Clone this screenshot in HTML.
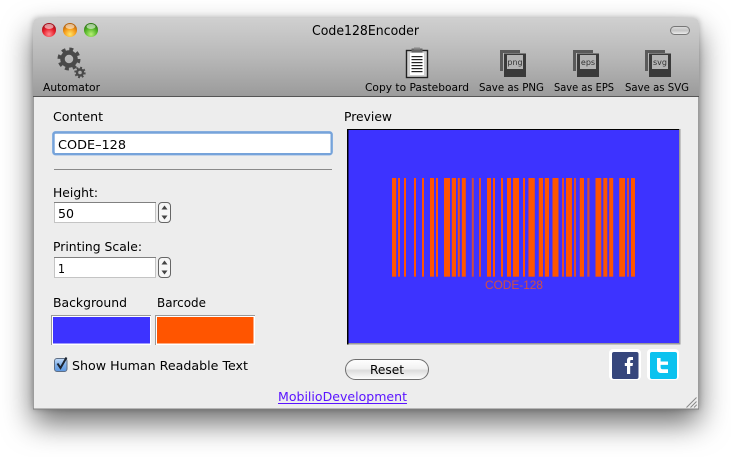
<!DOCTYPE html>
<html><head><meta charset="utf-8"><title>Code128Encoder</title>
<style>
html,body{margin:0;padding:0;background:#fff;width:731px;height:457px;overflow:hidden}
#win{position:absolute;left:33px;top:18px;width:666px;height:391px;border-radius:5px 5px 0 0;box-shadow:0 14px 30px rgba(0,0,0,.58),0 0 6px rgba(0,0,0,.25)}
svg{position:absolute;left:0;top:0}
text{font-family:"DejaVu Sans","Liberation Sans",sans-serif;fill:#000;stroke:none}
</style></head><body>
<div id="win"></div>
<svg width="731" height="457" viewBox="0 0 731 457" xmlns="http://www.w3.org/2000/svg">
<defs>
<linearGradient id="tb" x1="0" y1="0" x2="0" y2="1"><stop offset="0" stop-color="#d0d0d0"/><stop offset=".5" stop-color="#b8b8b8"/><stop offset="1" stop-color="#9b9b9b"/></linearGradient>
<radialGradient id="r" cx=".5" cy=".8" r=".7"><stop offset="0" stop-color="#ff8a90"/><stop offset=".6" stop-color="#e8202c"/><stop offset="1" stop-color="#a50c18"/></radialGradient>
<radialGradient id="y" cx=".5" cy=".8" r=".7"><stop offset="0" stop-color="#ffe56a"/><stop offset=".6" stop-color="#f59a18"/><stop offset="1" stop-color="#b8640c"/></radialGradient>
<radialGradient id="g" cx=".5" cy=".8" r=".7"><stop offset="0" stop-color="#b8f078"/><stop offset=".6" stop-color="#58b82a"/><stop offset="1" stop-color="#2f7c14"/></radialGradient>
<linearGradient id="btn" x1="0" y1="0" x2="0" y2="1"><stop offset="0" stop-color="#fff"/><stop offset=".45" stop-color="#f2f2f2"/><stop offset=".55" stop-color="#dcdcdc"/><stop offset="1" stop-color="#fff"/></linearGradient>
<linearGradient id="chk" x1="0" y1="0" x2="0" y2="1"><stop offset="0" stop-color="#c4dcf8"/><stop offset=".5" stop-color="#7fb0ea"/><stop offset="1" stop-color="#5d97e0"/></linearGradient>
<linearGradient id="pill" x1="0" y1="0" x2="0" y2="1"><stop offset="0" stop-color="#ddd"/><stop offset=".5" stop-color="#c4c4c4"/><stop offset="1" stop-color="#f2f2f2"/></linearGradient>
</defs>

<!-- window -->
<path d="M33 23a5 5 0 0 1 5-5h656a5 5 0 0 1 5 5v73H33z" fill="url(#tb)"/>
<rect x="33" y="96.5" width="666" height="312.5" fill="#ededed"/>
<rect x="33" y="96" width="666" height="1" fill="#555"/>
<rect x="33" y="97" width="1" height="312" fill="#9c9c9c"/>
<rect x="698" y="97" width="1" height="312" fill="#9c9c9c"/>
<rect x="33" y="408.5" width="666" height="1" fill="#808080"/>

<!-- traffic lights -->
<circle cx="49" cy="30" r="7" fill="url(#r)"/><ellipse cx="49" cy="26.5" rx="4.5" ry="2.5" fill="#fff" opacity=".55"/>
<circle cx="70" cy="30" r="7" fill="url(#y)"/><ellipse cx="70" cy="26.5" rx="4.5" ry="2.5" fill="#fff" opacity=".55"/>
<circle cx="91" cy="30" r="7" fill="url(#g)"/><ellipse cx="91" cy="26.5" rx="4.5" ry="2.5" fill="#fff" opacity=".55"/>

<text x="312" y="35" font-size="13" textLength="107" lengthAdjust="spacingAndGlyphs">Code128Encoder</text>
<rect x="670.5" y="26.5" width="19" height="8" rx="4" fill="url(#pill)" stroke="#777" stroke-width="1"/>

<!-- gear icon -->
<circle cx="69" cy="59" r="6.5" fill="none" stroke="#4a4a4a" stroke-width="4.5"/>
<circle cx="69" cy="59" r="9.8" fill="none" stroke="#4a4a4a" stroke-width="3.4" stroke-dasharray="3.9 3.8"/>
<circle cx="80" cy="72.5" r="3" fill="none" stroke="#4a4a4a" stroke-width="2.4"/>
<circle cx="80" cy="72.5" r="4.8" fill="none" stroke="#4a4a4a" stroke-width="1.8" stroke-dasharray="1.9 1.87"/>
<text x="43" y="91" font-size="11" textLength="57" lengthAdjust="spacingAndGlyphs">Automator</text>

<!-- clipboard icon -->
<rect x="406.5" y="50.5" width="21" height="27" fill="#cfcfcf" stroke="#222" stroke-width="1.4"/>
<rect x="410" y="53" width="14" height="22" fill="#fff"/>
<rect x="411.5" y="48.5" width="11" height="4" fill="#666"/>
<rect x="414" y="47.5" width="6" height="2" fill="#888"/>
<g fill="#222"><rect x="411.5" y="56" width="11" height="1.2"/><rect x="411.5" y="59" width="11" height="1.2"/><rect x="411.5" y="62" width="11" height="1.2"/><rect x="411.5" y="65" width="11" height="1.2"/><rect x="411.5" y="68" width="11" height="1.2"/><rect x="411.5" y="71" width="11" height="1.2"/></g>
<text x="365" y="91" font-size="11" textLength="104" lengthAdjust="spacingAndGlyphs">Copy to Pasteboard</text>

<!-- save icons -->
<g>
<path d="M500 71V50h20v3h-17v18z" fill="#5a5a5a"/>
<rect x="504" y="53.5" width="22" height="23.5" fill="#3a3a3a"/>
<rect x="507" y="55" width="16" height="14" fill="#b4b4b4"/>
<text x="515" y="65" font-size="8" text-anchor="middle" style="fill:#333">png</text>
</g>
<text x="479" y="91" font-size="11" textLength="65" lengthAdjust="spacingAndGlyphs">Save as PNG</text>
<g>
<path d="M573 71V50h20v3h-17v18z" fill="#5a5a5a"/>
<rect x="577" y="53.5" width="22" height="23.5" fill="#3a3a3a"/>
<rect x="580" y="55" width="16" height="14" fill="#b4b4b4"/>
<text x="588" y="65" font-size="8" text-anchor="middle" style="fill:#333">eps</text>
</g>
<text x="554" y="91" font-size="11" textLength="60" lengthAdjust="spacingAndGlyphs">Save as EPS</text>
<g>
<path d="M645 71V50h20v3h-17v18z" fill="#5a5a5a"/>
<rect x="649" y="53.5" width="22" height="23.5" fill="#3a3a3a"/>
<rect x="652" y="55" width="16" height="14" fill="#b4b4b4"/>
<text x="660" y="65" font-size="8" text-anchor="middle" style="fill:#333">svg</text>
</g>
<text x="625" y="91" font-size="11" textLength="64" lengthAdjust="spacingAndGlyphs">Save as SVG</text>

<!-- left form -->
<text x="53" y="121" font-size="12.5" textLength="50" lengthAdjust="spacingAndGlyphs">Content</text>
<rect x="52.5" y="131.5" width="280" height="23.5" rx="3" fill="none" stroke="#b4cdec" stroke-width="1"/>
<rect x="53.5" y="132.5" width="278" height="21.5" rx="2" fill="#fff" stroke="#76a3da" stroke-width="2.4"/>
<rect x="55" y="134" width="275.5" height="19" fill="#fff"/>
<text x="58" y="149" font-size="12.5" textLength="68" lengthAdjust="spacingAndGlyphs">CODE–128</text>
<rect x="54" y="169" width="278" height="1" fill="#8a8a8a"/>

<text x="53" y="197" font-size="12.5" textLength="45" lengthAdjust="spacingAndGlyphs">Height:</text>
<rect x="54.5" y="202.5" width="101" height="20" fill="#fff" stroke="#c4c4c4"/><rect x="54" y="202" width="102" height="1" fill="#808080"/>
<text x="58" y="218" font-size="12.5" textLength="16" lengthAdjust="spacingAndGlyphs">50</text>
<rect x="158.5" y="202.5" width="12" height="20" rx="3.5" fill="#f6f6f6" stroke="#666"/>
<path d="M164.5 205.5l3 4h-6zM164.5 219.5l3-4h-6z" fill="#444"/>

<text x="53" y="251" font-size="12.5" textLength="89" lengthAdjust="spacingAndGlyphs">Printing Scale:</text>
<rect x="54.5" y="257.5" width="101" height="20" fill="#fff" stroke="#c4c4c4"/><rect x="54" y="257" width="102" height="1" fill="#808080"/>
<text x="58" y="273" font-size="12.5" textLength="7" lengthAdjust="spacingAndGlyphs">1</text>
<rect x="158.5" y="257.5" width="12" height="20" rx="3.5" fill="#f6f6f6" stroke="#666"/>
<path d="M164.5 260.5l3 4h-6zM164.5 274.5l3-4h-6z" fill="#444"/>

<text x="53" y="307" font-size="12.5" textLength="74" lengthAdjust="spacingAndGlyphs">Background</text>
<text x="157" y="307" font-size="12.5" textLength="49" lengthAdjust="spacingAndGlyphs">Barcode</text>
<rect x="51" y="315" width="100" height="30" fill="#fff"/><path d="M51 345V315h100v1H52v29z" fill="#999"/>
<rect x="53" y="317" width="97" height="26.5" fill="#3d33ff"/>
<rect x="155" y="315" width="100" height="30" fill="#fff"/><path d="M155 345V315h100v1H156v29z" fill="#999"/>
<rect x="157" y="317" width="96.5" height="26.5" fill="#ff5500"/>

<rect x="54.5" y="358.5" width="12.5" height="13" rx="2.5" fill="url(#chk)" stroke="#5f6f85"/>
<path d="M57.5 363.5l3 4.5 6-10.5" fill="none" stroke="#1c2430" stroke-width="2"/>
<text x="72" y="370" font-size="12.5" textLength="176" lengthAdjust="spacingAndGlyphs">Show Human Readable Text</text>

<!-- preview -->
<text x="344" y="121" font-size="12.5" textLength="48" lengthAdjust="spacingAndGlyphs">Preview</text>
<rect x="347" y="129" width="333.5" height="215.5" fill="#999"/>
<rect x="347" y="129" width="332" height="1" fill="#000"/>
<rect x="347" y="129" width="1.5" height="215.5" fill="#000"/>
<rect x="348.5" y="130" width="330.5" height="213" fill="#3d33ff"/>
<g fill="#ff5500">
<rect x="392" y="178" width="4.2" height="98.7"/><rect x="398" y="178" width="2" height="98.7"/><rect x="404" y="178" width="2" height="98.7"/><rect x="414" y="178" width="2" height="98.7"/><rect x="422" y="178" width="2" height="98.7"/><rect x="430" y="178" width="4" height="98.7"/><rect x="436" y="178" width="2" height="98.7"/><rect x="444" y="178" width="6" height="98.7"/><rect x="451.8" y="178" width="4.2" height="98.7"/><rect x="457.8" y="178" width="2" height="98.7"/><rect x="461.8" y="178" width="4" height="98.7"/>
<rect x="471.8" y="178" width="2" height="98.7" opacity=".75"/><rect x="479" y="178" width="2" height="98.7" opacity=".85"/><rect x="487" y="178" width="4" height="98.7"/><rect x="493" y="178" width="2" height="98.7"/><rect x="501" y="178" width="2" height="98.7"/><rect x="507" y="178" width="4" height="98.7"/><rect x="513" y="178" width="6" height="98.7"/><rect x="523" y="178" width="2" height="98.7"/><rect x="528.5" y="178" width="6.3" height="98.7"/><rect x="538.8" y="178" width="4.2" height="98.7"/><rect x="544.8" y="178" width="4.2" height="98.7"/><rect x="552.5" y="178" width="6" height="98.7"/><rect x="562" y="178" width="2" height="98.7" opacity=".85"/><rect x="566" y="178" width="6" height="98.7"/><rect x="574" y="178" width="2" height="98.7" opacity=".85"/><rect x="579.8" y="178" width="4.2" height="98.7"/><rect x="587.3" y="178" width="2.2" height="98.7" opacity=".8"/><rect x="595.5" y="178" width="5.8" height="98.7"/><rect x="603.3" y="178" width="4" height="98.7"/><rect x="609.2" y="178" width="4" height="98.7"/><rect x="619.2" y="178" width="5.8" height="98.7"/><rect x="627" y="178" width="2" height="98.7" opacity=".8"/><rect x="631" y="178" width="4" height="98.7"/>
</g>
<text x="485" y="289" font-size="12" textLength="58" lengthAdjust="spacingAndGlyphs" style="font-family:'Liberation Sans',sans-serif;fill:#d4503f">CODE-128</text>

<!-- reset -->
<rect x="345.5" y="359.5" width="83" height="20" rx="10" fill="url(#btn)" stroke="#6f6f6f"/>
<text x="370" y="374" font-size="12.5" textLength="34" lengthAdjust="spacingAndGlyphs">Reset</text>

<!-- social -->
<rect x="609" y="349" width="32" height="31" rx="4" fill="#fff"/>
<rect x="612" y="352" width="26.5" height="27" rx="2" fill="#36467c"/>
<path d="M627 374v-8h-2.2v-3H627v-2.5c0-2.4 1.3-3.5 3.4-3.5h2.6v3h-1.6c-.9 0-1.2.4-1.2 1.2V363h2.8l-.4 3H630.2v8z" fill="#fff"/>
<rect x="647" y="349" width="32" height="31" rx="4" fill="#fff"/>
<rect x="650" y="352" width="27" height="27" rx="2" fill="#0bc2ef"/>
<path d="M657 358h3.6v3.5h7.4v3.4h-7.4v2.4c0 1.3.7 2 2 2h5.4v3.7h-6.6c-3 0-4.4-1.8-4.4-4.4z" fill="#fff"/>

<!-- link -->
<text x="278" y="401" font-size="12.5" textLength="129" lengthAdjust="spacingAndGlyphs" style="fill:#5a14ff">MobilioDevelopment</text>
<rect x="278" y="403" width="129" height="1" fill="#5a14ff"/>

<!-- grip -->
<path d="M686.5 407.5l10-10M690.5 407.5l6-6M694 407.5l2.8-2.8" stroke="#888" stroke-width="1" fill="none"/>
</svg>
</body></html>
